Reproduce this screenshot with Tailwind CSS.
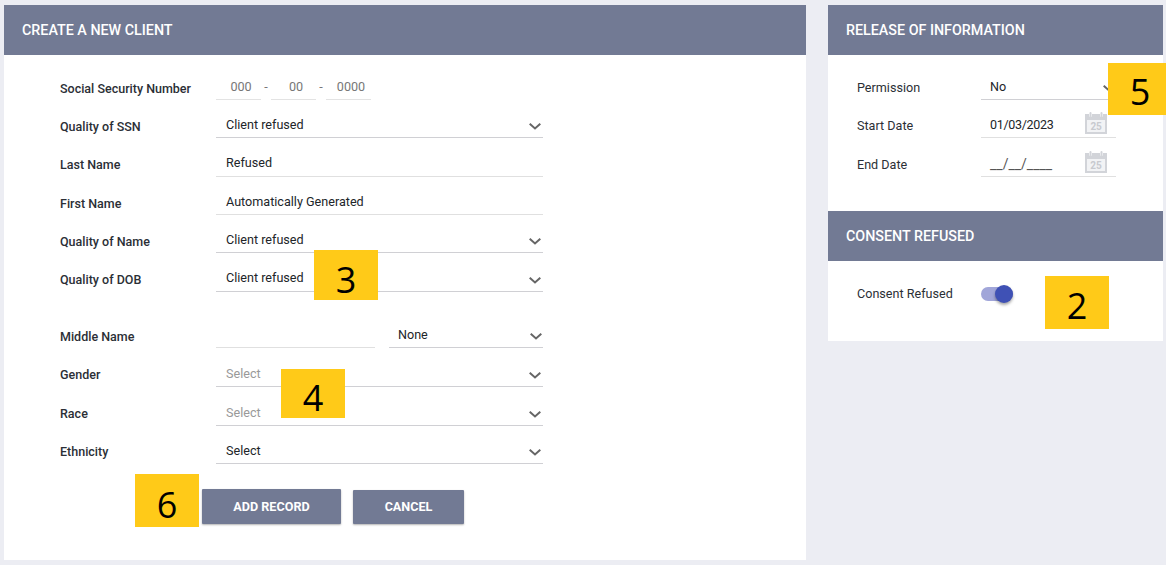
<!DOCTYPE html>
<html><head><meta charset="utf-8"><script src="https://cdn.jsdelivr.net/npm/@tailwindcss/browser@4"></script></head>
<body class="m-0 bg-[#ecedf3] font-['Roboto',sans-serif] text-[#212529]">
<div class="relative w-[1166px] h-[565px] overflow-hidden pl-[4px] pt-[5px] flex items-start gap-[22px]">
  <section class="w-[802px] h-[555px] bg-white flex flex-col">
    <h2 class="h-[50px] shrink-0 bg-[#727a94] text-white text-[14.3px] font-medium pl-[18px] pt-[1px] flex items-center">CREATE A NEW CLIENT</h2>
    <form class="pt-[6.67px] pl-[56px] flex flex-col">
      <div class="h-[38.33px] flex items-end">
        <label class="w-[156px] text-[12.5px] font-medium text-[#2b2f36] pb-[1.5px]">Social Security Number</label>
        <div class="flex items-end text-[12.6px] text-[#777]">
          <span class="w-[45px] h-[31px] border-b border-[#e3e3e3] flex items-center justify-center pl-[5px] pt-[6px]">000</span>
          <span class="w-[10px] h-[31px] flex items-center justify-center pt-[6px]">-</span>
          <span class="w-[45px] h-[31px] border-b border-[#e3e3e3] flex items-center justify-center pl-[5px] pt-[6px]">00</span>
          <span class="w-[10px] h-[31px] flex items-center justify-center pt-[6px]">-</span>
          <span class="w-[45px] h-[31px] border-b border-[#e3e3e3] flex items-center justify-center pl-[5px] pt-[6px]">0000</span>
        </div>
      </div>
      <div class="h-[38.33px] flex items-end">
        <label class="w-[156px] text-[12.5px] font-medium text-[#2b2f36] pb-[1.5px]">Quality of SSN</label>
        <div class="w-[327px] h-[31px] border-b border-[#d0d0d4] flex items-center justify-between pl-[10px] pr-[2px] text-[12.6px] pt-[7px]"><span>Client refused</span><svg class="mt-[2px]" width="12" height="7" viewBox="0 0 12 7" fill="none" stroke="#666" stroke-width="2"><path d="M.7.8l5.3 4.6L11.3.8"/></svg></div>
      </div>
      <div class="h-[38.33px] flex items-end">
        <label class="w-[156px] text-[12.5px] font-medium text-[#2b2f36] pb-[1.5px]">Last Name</label>
        <div class="w-[327px] h-[31px] border-b border-[#e0e0e0] flex items-center pl-[10px] text-[12.6px] pt-[6px]">Refused</div>
      </div>
      <div class="h-[38.33px] flex items-end">
        <label class="w-[156px] text-[12.5px] font-medium text-[#2b2f36] pb-[1.5px]">First Name</label>
        <div class="w-[327px] h-[31px] border-b border-[#e0e0e0] flex items-center pl-[10px] text-[12.6px] pt-[7px]">Automatically Generated</div>
      </div>
      <div class="h-[38.33px] flex items-end">
        <label class="w-[156px] text-[12.5px] font-medium text-[#2b2f36] pb-[1.5px]">Quality of Name</label>
        <div class="w-[327px] h-[31px] border-b border-[#d0d0d4] flex items-center justify-between pl-[10px] pr-[2px] text-[12.6px] pt-[7px]"><span>Client refused</span><svg class="mt-[2px]" width="12" height="7" viewBox="0 0 12 7" fill="none" stroke="#666" stroke-width="2"><path d="M.7.8l5.3 4.6L11.3.8"/></svg></div>
      </div>
      <div class="h-[38.33px] flex items-end">
        <label class="w-[156px] text-[12.5px] font-medium text-[#2b2f36] pb-[1.5px]">Quality of DOB</label>
        <div class="w-[327px] h-[31px] border-b border-[#d0d0d4] flex items-center justify-between pl-[10px] pr-[2px] text-[12.6px] pt-[6px]"><span>Client refused</span><svg class="mt-[3px]" width="12" height="7" viewBox="0 0 12 7" fill="none" stroke="#666" stroke-width="2"><path d="M.7.8l5.3 4.6L11.3.8"/></svg></div>
      </div>
      <div class="h-[38px] mt-[18.33px] flex items-end">
        <label class="w-[156px] text-[12.5px] font-medium text-[#2b2f36] pb-[1.5px]">Middle Name</label>
        <div class="w-[159px] h-[31px] border-b border-[#e0e0e0]"></div>
        <div class="ml-[14px] w-[154px] h-[31px] border-b border-[#d0d0d4] flex items-center justify-between pl-[9px] pr-[1px] text-[12.6px] pt-[7px]"><span>None</span><svg class="mt-[2px]" width="12" height="7" viewBox="0 0 12 7" fill="none" stroke="#666" stroke-width="2"><path d="M.7.8l5.3 4.6L11.3.8"/></svg></div>
      </div>
      <div class="h-[39px] flex items-end">
        <label class="w-[156px] text-[12.5px] font-medium text-[#2b2f36] pb-[2.5px]">Gender</label>
        <div class="w-[327px] h-[31px] border-b border-[#d0d0d4] flex items-center justify-between pl-[10px] pr-[2px] text-[12.6px] text-[#999] pt-[7px]"><span>Select</span><svg class="mt-[2px]" width="12" height="7" viewBox="0 0 12 7" fill="none" stroke="#666" stroke-width="2"><path d="M.7.8l5.3 4.6L11.3.8"/></svg></div>
      </div>
      <div class="h-[39px] flex items-end">
        <label class="w-[156px] text-[12.5px] font-medium text-[#2b2f36] pb-[2.5px]">Race</label>
        <div class="w-[327px] h-[31px] border-b border-[#d0d0d4] flex items-center justify-between pl-[10px] pr-[2px] text-[12.6px] text-[#999] pt-[6px]"><span>Select</span><svg class="mt-[3px]" width="12" height="7" viewBox="0 0 12 7" fill="none" stroke="#666" stroke-width="2"><path d="M.7.8l5.3 4.6L11.3.8"/></svg></div>
      </div>
      <div class="h-[38px] flex items-end">
        <label class="w-[156px] text-[12.5px] font-medium text-[#2b2f36] pb-[2.5px]">Ethnicity</label>
        <div class="w-[327px] h-[31px] border-b border-[#d0d0d4] flex items-center justify-between pl-[10px] pr-[2px] text-[12.6px] pt-[7px]"><span>Select</span><svg class="mt-[2px]" width="12" height="7" viewBox="0 0 12 7" fill="none" stroke="#666" stroke-width="2"><path d="M.7.8l5.3 4.6L11.3.8"/></svg></div>
      </div>
      <div class="flex items-start mt-[25px] ml-[142px] gap-[12px]">
        <button type="button" class="w-[139px] h-[35px] pt-[1px] bg-[#727a94] rounded-[1px] text-white text-[12.6px] font-bold shadow-[0_1px_2px_rgba(0,0,0,0.3)]">ADD RECORD</button>
        <button type="button" class="w-[111px] h-[34px] pt-[1px] mt-[1px] bg-[#727a94] rounded-[1px] text-white text-[12.6px] font-bold shadow-[0_1px_2px_rgba(0,0,0,0.3)]">CANCEL</button>
      </div>
    </form>
  </section>
  <aside class="w-[335px] h-[336px] bg-white flex flex-col">
    <h2 class="h-[50px] shrink-0 bg-[#727a94] text-white text-[14.3px] font-medium pl-[18px] pt-[1px] flex items-center">RELEASE OF INFORMATION</h2>
    <div class="pt-[6.67px] pl-[29px] flex flex-col">
      <div class="h-[38.33px] flex items-end">
        <label class="w-[124px] text-[12.6px] text-[#2b2f36] pb-[2px]">Permission</label>
        <div class="w-[135px] h-[31px] border-b border-[#d0d0d4] flex items-center justify-between pl-[9px] pr-[1px] text-[12.6px] pt-[7px]"><span>No</span><svg class="mt-[2px]" width="12" height="7" viewBox="0 0 12 7" fill="none" stroke="#666" stroke-width="2"><path d="M.7.8l5.3 4.6L11.3.8"/></svg></div>
      </div>
      <div class="h-[38.33px] flex items-end">
        <label class="w-[124px] text-[12.6px] text-[#2b2f36] pb-[2px]">Start Date</label>
        <div class="w-[135px] h-[31px] border-b border-[#e0e0e0] flex items-center justify-between pl-[9px] pr-[9px] text-[12.5px] tracking-[-0.3px] pt-[7px]"><span>01/03/2023</span>
          <svg class="mt-[-5px]" width="22" height="22" viewBox="0 0 22 22"><path fill="#d2d4d9" d="M0 2h4v2.500h3V2h8v2.500h3V2h4v20H0z"/><rect x="4.500" y="0" width="2" height="5" rx="1" fill="#d2d4d9"/><rect x="15.500" y="0" width="2" height="5" rx="1" fill="#d2d4d9"/><rect x="2" y="8" width="18" height="12" fill="#f2f3f5"/><text x="11" y="18" font-size="10" font-weight="700" text-anchor="middle" fill="#c8cacf" font-family="Roboto">25</text></svg>
        </div>
      </div>
      <div class="h-[38.33px] flex items-end">
        <label class="w-[124px] text-[12.6px] text-[#2b2f36] pb-[2px]">End Date</label>
        <div class="w-[135px] h-[31px] border-b border-[#e0e0e0] flex items-center justify-between pl-[9px] pr-[9px] text-[14px] text-[#555] pt-[7px]"><span>__/__/____</span>
          <svg class="mt-[-5px]" width="22" height="22" viewBox="0 0 22 22"><path fill="#d2d4d9" d="M0 2h4v2.500h3V2h8v2.500h3V2h4v20H0z"/><rect x="4.500" y="0" width="2" height="5" rx="1" fill="#d2d4d9"/><rect x="15.500" y="0" width="2" height="5" rx="1" fill="#d2d4d9"/><rect x="2" y="8" width="18" height="12" fill="#f2f3f5"/><text x="11" y="18" font-size="10" font-weight="700" text-anchor="middle" fill="#c8cacf" font-family="Roboto">25</text></svg>
        </div>
      </div>
    </div>
    <h2 class="mt-[34.33px] h-[50px] shrink-0 bg-[#727a94] text-white text-[14.3px] font-medium pl-[18px] pt-[1px] flex items-center">CONSENT REFUSED</h2>
    <div class="pl-[29px] pt-[23px] flex items-center">
      <label class="w-[124px] text-[12.6px] text-[#2b2f36] pt-[1px]">Consent Refused</label>
      <span class="relative w-[32px] h-[14px] rounded-full bg-[#a1a6d9]"><span class="absolute right-0 top-[-2px] w-[18px] h-[18px] rounded-full bg-[#3f51b5] shadow-[0_2px_3px_rgba(0,0,0,0.35)]"></span></span>
    </div>
  </aside>
  <div class="absolute left-[314px] top-[250px] w-[64px] h-[50px] bg-[#ffca18] flex items-center justify-center text-[36px] text-black font-['Open_Sans',sans-serif] pt-[10px]">3</div>
  <div class="absolute left-[281px] top-[369px] w-[64px] h-[49px] bg-[#ffca18] flex items-center justify-center text-[36px] text-black font-['Open_Sans',sans-serif] pt-[8px]">4</div>
  <div class="absolute left-[1108px] top-[63px] w-[64px] h-[52px] bg-[#ffca18] flex items-center justify-center text-[36px] text-black font-['Open_Sans',sans-serif] pt-[5px]">5</div>
  <div class="absolute left-[1045px] top-[276px] w-[64px] h-[53px] bg-[#ffca18] flex items-center justify-center text-[36px] text-black font-['Open_Sans',sans-serif] pt-[6px]">2</div>
  <div class="absolute left-[135px] top-[474px] w-[64px] h-[53px] bg-[#ffca18] flex items-center justify-center text-[36px] text-black font-['Open_Sans',sans-serif] pt-[8px]">6</div>
</div>
</body></html>
